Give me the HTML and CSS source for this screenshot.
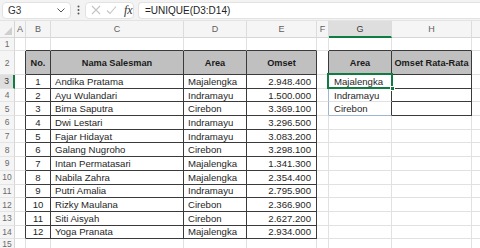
FILE: index.html
```html
<!DOCTYPE html>
<html>
<head>
<meta charset="utf-8">
<link rel="stylesheet" href="styles.css">
</head>
<body>
<div class="app">
  <div class="fbar">
    <div class="namebox">
      <span class="nb-text">G3</span>
      <svg class="chev" width="8" height="5" viewBox="0 0 8 5"><path d="M0.5 0.5 L4 4 L7.5 0.5" fill="none" stroke="#555" stroke-width="1"/></svg>
    </div>
    <svg class="vdots" width="3" height="10" viewBox="0 0 3 10"><circle cx="1.5" cy="1.5" r="1" fill="#555"/><circle cx="1.5" cy="5" r="1" fill="#555"/><circle cx="1.5" cy="8.5" r="1" fill="#555"/></svg>
    <div class="fxbox">
      <svg width="10" height="10" viewBox="0 0 10 10"><path d="M1 1 L9 9 M9 1 L1 9" stroke="#c4c4c4" stroke-width="1.1" fill="none"/></svg>
      <svg width="11" height="10" viewBox="0 0 11 10"><path d="M1 5.5 L4 8.5 L10 1.5" stroke="#c4c4c4" stroke-width="1.1" fill="none"/></svg>
      <span class="fx">fx</span>
    </div>
    <div class="formula">=UNIQUE(D3:D14)</div>
  </div>

  <div class="sheet">
    <!-- column headers -->
    <div class="corner"><svg width="8" height="8" viewBox="0 0 8 8"><path d="M8 0 L8 8 L0 8 Z" fill="#cfcfcf"/></svg></div>
    <div class="ch">A</div><div class="ch">B</div><div class="ch">C</div><div class="ch">D</div><div class="ch">E</div><div class="ch">F</div><div class="ch chsel">G</div><div class="ch">H</div><div class="ch chl"></div>

    <!-- row 1 -->
    <div class="rh">1</div><div class="c"></div><div class="c db"></div><div class="c db"></div><div class="c db"></div><div class="c db"></div><div class="c"></div><div class="c db"></div><div class="c db"></div><div class="c"></div>

    <!-- row 2 -->
    <div class="rh">2</div><div class="c dr"></div><div class="c th">No.</div><div class="c th">Nama Salesman</div><div class="c th">Area</div><div class="c th">Omset</div><div class="c dr"></div><div class="c th">Area</div><div class="c th">Omset Rata-Rata</div><div class="c"></div>

    <!-- row 3 -->
    <div class="rh rhsel">3</div><div class="c dr"></div><div class="c td ctr">1</div><div class="c td">Andika Pratama</div><div class="c td">Majalengka</div><div class="c td num">2.948.400</div><div class="c sr"></div><div class="c gsp sel-cell">Majalengka<span class="sel"><span class="handle"></span></span></div><div class="c td"></div><div class="c"></div>

    <!-- row 4 -->
    <div class="rh">4</div><div class="c dr"></div><div class="c td ctr">2</div><div class="c td">Ayu Wulandari</div><div class="c td">Indramayu</div><div class="c td num">1.500.000</div><div class="c sr"></div><div class="c gsp">Indramayu</div><div class="c td"></div><div class="c"></div>

    <!-- row 5 -->
    <div class="rh">5</div><div class="c dr"></div><div class="c td ctr">3</div><div class="c td">Bima Saputra</div><div class="c td">Cirebon</div><div class="c td num">3.369.100</div><div class="c sr"></div><div class="c gsp sb">Cirebon</div><div class="c td"></div><div class="c"></div>

    <!-- row 6 -->
    <div class="rh">6</div><div class="c dr"></div><div class="c td ctr">4</div><div class="c td">Dwi Lestari</div><div class="c td">Indramayu</div><div class="c td num">3.296.500</div><div class="c"></div><div class="c"></div><div class="c"></div><div class="c"></div>

    <!-- row 7 -->
    <div class="rh">7</div><div class="c dr"></div><div class="c td ctr">5</div><div class="c td">Fajar Hidayat</div><div class="c td">Indramayu</div><div class="c td num">3.083.200</div><div class="c"></div><div class="c"></div><div class="c"></div><div class="c"></div>

    <!-- row 8 -->
    <div class="rh">8</div><div class="c dr"></div><div class="c td ctr">6</div><div class="c td">Galang Nugroho</div><div class="c td">Cirebon</div><div class="c td num">3.298.100</div><div class="c"></div><div class="c"></div><div class="c"></div><div class="c"></div>

    <!-- row 9 -->
    <div class="rh">9</div><div class="c dr"></div><div class="c td ctr">7</div><div class="c td">Intan Permatasari</div><div class="c td">Majalengka</div><div class="c td num">1.341.300</div><div class="c"></div><div class="c"></div><div class="c"></div><div class="c"></div>

    <!-- row 10 -->
    <div class="rh">10</div><div class="c dr"></div><div class="c td ctr">8</div><div class="c td">Nabila Zahra</div><div class="c td">Majalengka</div><div class="c td num">2.354.400</div><div class="c"></div><div class="c"></div><div class="c"></div><div class="c"></div>

    <!-- row 11 -->
    <div class="rh">11</div><div class="c dr"></div><div class="c td ctr">9</div><div class="c td">Putri Amalia</div><div class="c td">Indramayu</div><div class="c td num">2.795.900</div><div class="c"></div><div class="c"></div><div class="c"></div><div class="c"></div>

    <!-- row 12 -->
    <div class="rh">12</div><div class="c dr"></div><div class="c td ctr">10</div><div class="c td">Rizky Maulana</div><div class="c td">Cirebon</div><div class="c td num">2.366.900</div><div class="c"></div><div class="c"></div><div class="c"></div><div class="c"></div>

    <!-- row 13 -->
    <div class="rh">13</div><div class="c dr"></div><div class="c td ctr">11</div><div class="c td">Siti Aisyah</div><div class="c td">Cirebon</div><div class="c td num">2.627.200</div><div class="c"></div><div class="c"></div><div class="c"></div><div class="c"></div>

    <!-- row 14 -->
    <div class="rh">14</div><div class="c dr"></div><div class="c td ctr">12</div><div class="c td">Yoga Pranata</div><div class="c td">Majalengka</div><div class="c td num">2.934.000</div><div class="c"></div><div class="c"></div><div class="c"></div><div class="c"></div>

    <!-- row 15 -->
    <div class="rh">15</div><div class="c"></div><div class="c"></div><div class="c"></div><div class="c"></div><div class="c"></div><div class="c"></div><div class="c"></div><div class="c"></div><div class="c"></div>
  </div>
</div>
</body>
</html>
```

FILE: styles.css
```css
* { box-sizing: border-box; }
html, body { margin: 0; padding: 0; }
body {
  width: 480px;
  height: 248px;
  overflow: hidden;
  background: #ffffff;
  font-family: "Liberation Sans", Arial, sans-serif;
  color: #1f1f1f;
}
.app {
  display: flex;
  flex-direction: column;
  height: 248px;
}
.fbar {
  height: 21px;
  flex: none;
  display: flex;
  align-items: center;
  background: #f3f3f3;
  border-bottom: 1px solid #e3e3e3;
  padding-left: 2px;
}
.namebox {
  width: 69px;
  height: 17px;
  background: #ffffff;
  border: 1px solid #e2e2e2;
  border-radius: 4px;
  display: flex;
  align-items: center;
  justify-content: space-between;
  padding: 0 5px 0 5px;
  font-size: 10px;
  color: #333;
}
.chev { margin-top: 1px; }
.vdots { margin-left: 6px; }
.fxbox {
  margin-left: 5px;
  width: 49px;
  height: 17px;
  background: #ffffff;
  border: 1px solid #e2e2e2;
  border-radius: 4px;
  display: flex;
  align-items: center;
  gap: 5px;
  padding-left: 5px;
}
.fx {
  font-family: "Liberation Serif", "Times New Roman", serif;
  font-style: italic;
  font-size: 12px;
  color: #333;
  margin-left: 2px;
}
.formula {
  margin-left: 4px;
  flex: 1;
  height: 17px;
  background: #ffffff;
  border: 1px solid #e2e2e2;
  border-right: none;
  border-radius: 4px 0 0 4px;
  display: flex;
  align-items: center;
  padding-left: 6px;
  font-size: 10px;
  color: #222;
}
.sheet {
  flex: 1;
  display: grid;
  grid-template-columns: 15px 11px 25px 133px 63px 70px 12px 63px 80px 1fr;
  grid-template-rows: 17px 13px 24px repeat(12, 13.7px) 1fr;
  font-size: 9.6px;
}
.sheet > div {
  display: flex;
  align-items: center;
  white-space: nowrap;
  overflow: visible;
  min-width: 0;
}
.corner {
  background: #f5f5f5;
  border-right: 1px solid #d6d6d6;
  border-bottom: 1px solid #d6d6d6;
  justify-content: flex-end;
  align-items: flex-end !important;
  padding: 0 2px 2px 0;
}
.ch {
  background: #f5f5f5;
  border-right: 1px solid #dcdcdc;
  border-bottom: 1px solid #d6d6d6;
  justify-content: center;
  color: #5f5f5f;
  font-size: 9px;
}
.chl { border-right: none; }
.chsel {
  background: #dedede;
  border-bottom: 2px solid #107c41;
  color: #3a3a3a;
}
.rh {
  background: #f5f5f5;
  border-right: 1px solid #d6d6d6;
  border-bottom: 1px solid #e4e4e4;
  justify-content: center;
  color: #6a6a6a;
  font-size: 8.5px;
}
.rhsel {
  background: #dedede;
  border-right: 2px solid #107c41;
  color: #3a3a3a;
}
.c {
  border-right: 1px solid #e1e1e1;
  border-bottom: 1px solid #e1e1e1;
  padding: 0 4px;
}
.db { border-bottom-color: #3a3a3a; }
.dr { border-right-color: #3a3a3a; }
.sr { border-right-color: #9fb6d3; }
.th {
  background: #c0c0c0;
  border-right-color: #3a3a3a;
  border-bottom-color: #3a3a3a;
  font-weight: bold;
  font-size: 9.2px;
  justify-content: center;
  padding: 0 2px;
  color: #1a1a1a;
}
.td {
  border-right-color: #3a3a3a;
  border-bottom-color: #3a3a3a;
}
.ctr { justify-content: center; }
.num { justify-content: flex-end; padding-right: 5px; }
.gsp {
  border-right-color: #3a3a3a;
  padding-left: 5px;
}
.sb { border-bottom-color: #9fb6d3; }
.sel-cell { position: relative; }
.sel {
  position: absolute;
  left: -2px;
  top: -2px;
  right: -2px;
  bottom: -1px;
  border: 2px solid #107c41;
}
.handle {
  position: absolute;
  right: -4px;
  bottom: -4px;
  width: 5px;
  height: 5px;
  background: #107c41;
  border: 1px solid #ffffff;
}
```
